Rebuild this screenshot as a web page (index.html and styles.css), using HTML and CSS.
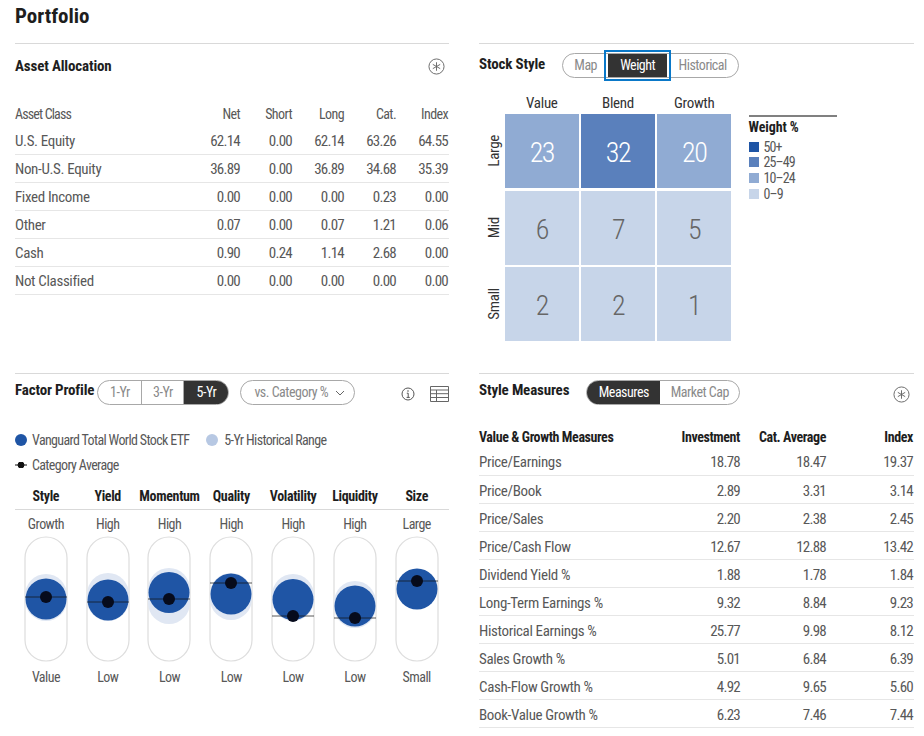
FILE: index.html
```html
<!DOCTYPE html>
<html lang="en">
<head>
<meta charset="utf-8">
<title>Portfolio</title>
<link rel="stylesheet" href="styles.css">
</head>
<body>
<main class="page">
  <h1 class="title">Portfolio</h1>
  <div class="sections">
    <section class="section">
      <div class="head head-asset">
        <h2 class="h2">Asset Allocation</h2>
        <svg class="star" viewBox="0 0 18 18"><circle cx="9" cy="9" r="8" /><path d="M9 4.5v9M5.1 6.75l7.8 4.5M12.9 6.75l-7.8 4.5" /></svg>
      </div>
      <table class="tbl alloc">
        <thead><tr><th>Asset Class</th><th>Net</th><th>Short</th><th>Long</th><th>Cat.</th><th>Index</th></tr></thead>
        <tbody>
          <tr><td>U.S. Equity</td><td>62.14</td><td>0.00</td><td>62.14</td><td>63.26</td><td>64.55</td></tr>
          <tr><td>Non-U.S. Equity</td><td>36.89</td><td>0.00</td><td>36.89</td><td>34.68</td><td>35.39</td></tr>
          <tr><td>Fixed Income</td><td>0.00</td><td>0.00</td><td>0.00</td><td>0.23</td><td>0.00</td></tr>
          <tr><td>Other</td><td>0.07</td><td>0.00</td><td>0.07</td><td>1.21</td><td>0.06</td></tr>
          <tr><td>Cash</td><td>0.90</td><td>0.24</td><td>1.14</td><td>2.68</td><td>0.00</td></tr>
          <tr><td>Not Classified</td><td>0.00</td><td>0.00</td><td>0.00</td><td>0.00</td><td>0.00</td></tr>
        </tbody>
      </table>
    </section>

    <section class="section">
      <div class="head head-style">
        <h2 class="h2">Stock Style</h2>
        <div class="seg seg-style">
          <span class="opt opt-map">Map</span>
          <span class="opt opt-weight on focus">Weight</span>
          <span class="opt opt-hist">Historical</span>
        </div>
      </div>
      <div class="style-body">
        <div class="box">
          <span></span><span class="col">Value</span><span class="col">Blend</span><span class="col">Growth</span>
          <span class="row"><b>Large</b></span><span class="cell c2">23</span><span class="cell c3">32</span><span class="cell c2">20</span>
          <span class="row"><b>Mid</b></span><span class="cell c1">6</span><span class="cell c1">7</span><span class="cell c1">5</span>
          <span class="row"><b>Small</b></span><span class="cell c1">2</span><span class="cell c1">2</span><span class="cell c1">1</span>
        </div>
        <div class="legend">
          <div class="legend-title">Weight %</div>
          <div class="lg"><i class="sw c4"></i>50+</div>
          <div class="lg"><i class="sw c3"></i>25–49</div>
          <div class="lg"><i class="sw c2"></i>10–24</div>
          <div class="lg"><i class="sw c1"></i>0–9</div>
        </div>
      </div>
    </section>

    <section class="section">
      <div class="head head-factor">
        <h2 class="h2">Factor Profile</h2>
        <div class="seg seg-factor">
          <span class="opt yr">1-Yr</span>
          <span class="opt yr div">3-Yr</span>
          <span class="opt yr on">5-Yr</span>
        </div>
        <div class="select">vs. Category %
          <svg class="chev" viewBox="0 0 10 6"><path d="M1 1l4 4 4-4" /></svg>
        </div>
        <svg class="info" viewBox="0 0 14 14"><circle cx="7" cy="7" r="6" /><path d="M5.8 6.2H7.2V10.4M5.6 10.4H8.8" /><circle class="dot" cx="7" cy="4" r=".8" /></svg>
        <svg class="grid-ico" viewBox="0 0 19 16"><path d="M.5.5h18v15H.5zM.5 4h18M.5 7.7h18M.5 11.5h18M6.5 4v11.5" /></svg>
      </div>
      <div class="key">
        <span class="key-item"><i class="kdot main"></i>Vanguard Total World Stock ETF</span>
        <span class="key-item key-second"><i class="kdot range"></i>5-Yr Historical Range</span>
      </div>
      <div class="key key-2">
        <span class="key-item"><svg class="kline" viewBox="0 0 12 6"><path d="M0 3h12" /><circle cx="6" cy="3" r="3" /></svg>Category Average</span>
      </div>
      <div class="factors">
        <div class="fcol"><b class="fh">Style</b><span class="fl">Growth</span>
          <svg class="pill" viewBox="0 0 44 126"><rect class="tr" x="1" y="1" width="42" height="124" rx="21"/><rect class="rg" x="1" y="38" width="42" height="47" rx="21"/><circle class="mn" cx="22" cy="63" r="20.5"/><path class="ln" d="M1 61h42"/><circle class="cat" cx="22" cy="61" r="6"/></svg>
          <span class="fl">Value</span></div>
        <div class="fcol"><b class="fh">Yield</b><span class="fl">High</span>
          <svg class="pill" viewBox="0 0 44 126"><rect class="tr" x="1" y="1" width="42" height="124" rx="21"/><rect class="rg" x="1" y="37" width="42" height="48" rx="21"/><circle class="mn" cx="22" cy="64" r="20.5"/><path class="ln" d="M1 66h42"/><circle class="cat" cx="22" cy="66" r="6"/></svg>
          <span class="fl">Low</span></div>
        <div class="fcol"><b class="fh">Momentum</b><span class="fl">High</span>
          <svg class="pill" viewBox="0 0 44 126"><rect class="tr" x="1" y="1" width="42" height="124" rx="21"/><rect class="rg" x="1" y="32" width="42" height="56" rx="21"/><circle class="mn" cx="22" cy="56.5" r="20.5"/><path class="ln" d="M1 63h42"/><circle class="cat" cx="22" cy="63" r="6"/></svg>
          <span class="fl">Low</span></div>
        <div class="fcol"><b class="fh">Quality</b><span class="fl">High</span>
          <svg class="pill" viewBox="0 0 44 126"><rect class="tr" x="1" y="1" width="42" height="124" rx="21"/><rect class="rg" x="1" y="37" width="42" height="47" rx="21"/><circle class="mn" cx="22" cy="58" r="20.5"/><path class="ln" d="M1 47h42"/><circle class="cat" cx="22" cy="47" r="6"/></svg>
          <span class="fl">Low</span></div>
        <div class="fcol"><b class="fh">Volatility</b><span class="fl">High</span>
          <svg class="pill" viewBox="0 0 44 126"><rect class="tr" x="1" y="1" width="42" height="124" rx="21"/><rect class="rg" x="1" y="38" width="42" height="47" rx="21"/><circle class="mn" cx="22" cy="63.5" r="20.5"/><path class="ln" d="M1 80h42"/><circle class="cat" cx="22" cy="80" r="6"/></svg>
          <span class="fl">Low</span></div>
        <div class="fcol"><b class="fh">Liquidity</b><span class="fl">High</span>
          <svg class="pill" viewBox="0 0 44 126"><rect class="tr" x="1" y="1" width="42" height="124" rx="21"/><rect class="rg" x="1" y="45" width="42" height="47" rx="21"/><circle class="mn" cx="22" cy="70" r="20.5"/><path class="ln" d="M1 82h42"/><circle class="cat" cx="22" cy="82" r="6"/></svg>
          <span class="fl">Low</span></div>
        <div class="fcol"><b class="fh">Size</b><span class="fl">Large</span>
          <svg class="pill" viewBox="0 0 44 126"><rect class="tr" x="1" y="1" width="42" height="124" rx="21"/><circle class="mn" cx="22" cy="53" r="20.5"/><path class="ln" d="M1 45h42"/><circle class="cat" cx="22" cy="45" r="6"/></svg>
          <span class="fl">Small</span></div>
      </div>
    </section>

    <section class="section">
      <div class="head head-measures">
        <h2 class="h2">Style Measures</h2>
        <div class="seg seg-measures">
          <span class="opt on m1">Measures</span>
          <span class="opt m2">Market Cap</span>
        </div>
        <svg class="star star-2" viewBox="0 0 18 18"><circle cx="9" cy="9" r="8" /><path d="M9 4.5v9M5.1 6.75l7.8 4.5M12.9 6.75l-7.8 4.5" /></svg>
      </div>
      <table class="tbl measures">
        <thead><tr><th>Value &amp; Growth Measures</th><th>Investment</th><th>Cat. Average</th><th>Index</th></tr></thead>
        <tbody>
          <tr><td>Price/Earnings</td><td>18.78</td><td>18.47</td><td>19.37</td></tr>
          <tr><td>Price/Book</td><td>2.89</td><td>3.31</td><td>3.14</td></tr>
          <tr><td>Price/Sales</td><td>2.20</td><td>2.38</td><td>2.45</td></tr>
          <tr><td>Price/Cash Flow</td><td>12.67</td><td>12.88</td><td>13.42</td></tr>
          <tr><td>Dividend Yield %</td><td>1.88</td><td>1.78</td><td>1.84</td></tr>
          <tr><td>Long-Term Earnings %</td><td>9.32</td><td>8.84</td><td>9.23</td></tr>
          <tr><td>Historical Earnings %</td><td>25.77</td><td>9.98</td><td>8.12</td></tr>
          <tr><td>Sales Growth %</td><td>5.01</td><td>6.84</td><td>6.39</td></tr>
          <tr><td>Cash-Flow Growth %</td><td>4.92</td><td>9.65</td><td>5.60</td></tr>
          <tr><td>Book-Value Growth %</td><td>6.23</td><td>7.46</td><td>7.44</td></tr>
        </tbody>
      </table>
    </section>
  </div>
</main>
</body>
</html>
```
FILE: styles.css
```css
* { box-sizing: border-box; }
html, body { margin: 0; padding: 0; background: #fff; }
body {
  font-family: "Roboto Condensed", "Liberation Sans Narrow", "Arial Narrow", Roboto, sans-serif;
  font-stretch: condensed;
  font-size: 15px;
  color: #585858;
  height: 736px;
  overflow: hidden;
}
.page { padding: 0 10px 0 15px; }
.title { margin: 0; height: 43px; padding-top: 4px; font-size: 21px; line-height: 24px; font-weight: 700; color: #1e1e1e; }
.sections { display: grid; grid-template-columns: 434px 435px; column-gap: 30px; grid-template-rows: 330px 363px; }
.section { border-top: 1px solid #d9d9d9; }
.head { display: flex; align-items: flex-start; height: 44px; position: relative; }
.h2 { margin: 0; font-size: 15px; line-height: 18px; font-weight: 700; letter-spacing: -.15px; color: #1e1e1e; padding-top: 12px; white-space: nowrap; }
.head-asset .h2 { padding-top: 13px; }
.head-style .h2 { padding-top: 11px; }
.head-factor .h2, .head-measures .h2 { padding-top: 7px; }
.star { width: 17px; height: 17px; margin: 14px 4px 0 auto; fill: none; stroke: #666; stroke-width: 1; }
.star-2 { margin-top: 12px; margin-right: 4px; }

.tbl { width: 100%; border-collapse: collapse; table-layout: fixed; }
.tbl th, .tbl td { padding: 0; text-align: right; font-weight: 400; white-space: nowrap; }
.tbl th:first-child, .tbl td:first-child { text-align: left; letter-spacing: -.35px; }
.tbl th:last-child, .tbl td:last-child { padding-right: 1px; }
.tbl td { height: 28px; padding-top: 2px; border-bottom: 1px solid #e6e6e6; letter-spacing: -.75px; }
.alloc { margin-top: 14px; }
.alloc th { height: 24px; font-size: 14px; letter-spacing: -.6px; }
.alloc th:first-child { width: 172px; letter-spacing: -.85px; }
.alloc th:nth-child(2) { width: 53px; }
.alloc th:nth-child(3), .alloc th:nth-child(4), .alloc th:nth-child(5) { width: 52px; }
.measures { margin-top: 9px; }
.measures td { padding-top: 3px; }
.measures th { height: 20px; font-size: 14px; font-weight: 700; color: #1e1e1e; letter-spacing: -.4px; }
.measures th:first-child { width: 175px; letter-spacing: -.4px; }
.measures th:nth-child(2) { width: 86px; }
.measures th:nth-child(3) { width: 86px; }

.seg { display: flex; height: 25px; border: 1px solid #a8a8a8; border-radius: 13px; font-size: 14px; line-height: 23px; color: #8a8a8a; letter-spacing: -.5px; }
.opt { display: block; text-align: center; }
.on { background: #333; color: #fff; }
.seg-style { margin: 9px 0 0 17px; width: 177px; }
.opt-map { width: 45px; }
.opt-weight { width: 59px; }
.opt-hist { flex: 1; }
.focus { outline: 2px solid #0a78c8; outline-offset: 2px; position: relative; }

.style-body { display: flex; }
.box { display: grid; grid-template-columns: 23.5px repeat(3, 73.7px); grid-template-rows: 23.5px repeat(3, 74px); gap: 2.5px; }
.col { text-align: center; line-height: 18px; padding-top: 6px; font-size: 15px; color: #333; letter-spacing: -.3px; }
.row { display: flex; align-items: center; justify-content: flex-end; color: #333; }
.row b { font-weight: 400; writing-mode: vertical-rl; transform: rotate(180deg); letter-spacing: -.3px; }
.cell { display: flex; align-items: center; justify-content: center; padding-top: 3px; font-size: 28px; font-weight: 300; letter-spacing: -1.4px; color: #fff; }
.c1 { background: #c7d5e9; color: #666; }
.c2 { background: #90abd3; }
.c3 { background: #5a80bc; }
.c4 { background: #1f55a5; }
.legend { width: 88px; margin: 27px 0 0 17.5px; border-top: 2px solid #808080; }
.legend-title { font-weight: 700; color: #1e1e1e; font-size: 14px; line-height: 18px; padding-top: 1px; margin-bottom: 3px; letter-spacing: -.1px; }
.lg { display: flex; align-items: center; height: 15.6px; font-size: 14px; letter-spacing: -.9px; }
.sw { width: 10px; height: 10px; margin-right: 5px; }

.seg-factor { margin: 6px 0 0 3px; width: 132px; }
.yr { width: 43px; }
.yr:first-child { border-radius: 12px 0 0 12px; }
.yr.on { border-radius: 0 12px 12px 0; flex: 1; }
.div { border-left: 1px solid #a8a8a8; border-right: 1px solid #a8a8a8; }
.select { margin: 6px 0 0 11px; height: 25px; width: 115px; border: 1px solid #a8a8a8; border-radius: 13px; font-size: 14px; line-height: 23px; padding-left: 13px; color: #8a8a8a; display: flex; align-items: center; gap: 7px; letter-spacing: -.5px; white-space: nowrap; }
.chev { width: 10px; height: 6px; fill: none; stroke: #666; stroke-width: 1; }
.info { width: 14px; height: 14px; margin: 13px 0 0 46px; fill: none; stroke: #555; stroke-width: 1; }
.info .dot { fill: #555; stroke: none; }
.grid-ico { width: 19px; height: 16px; margin: 12px 0 0 auto; fill: none; stroke: #666; stroke-width: 1; }
.key { display: flex; height: 18px; line-height: 18px; margin-top: 13px; font-size: 14px; letter-spacing: -.65px; }
.key-2 { margin-top: 7px; }
.key-item { display: flex; align-items: center; white-space: nowrap; }
.key-second { margin-left: 17px; }
.kdot { width: 12px; height: 12px; border-radius: 50%; margin-right: 5px; }
.main { background: #1f55a5; }
.range { background: #b7c8e3; margin-right: 6px; }
.kline { width: 12px; height: 6px; margin-right: 5px; stroke: #111; fill: #111; }
.factors { display: grid; grid-template-columns: repeat(7, 61.8px); margin-top: 13px; width: 434px; position: relative; }
.factors::before { content: ""; position: absolute; left: 0; right: 0; top: 22px; border-top: 1px solid #d9d9d9; }
.fcol { display: flex; flex-direction: column; align-items: center; }
.fh { height: 18px; line-height: 18px; font-weight: 700; font-size: 14px; color: #1e1e1e; margin-bottom: 10px; white-space: nowrap; letter-spacing: -.35px; }
.fl { height: 18px; line-height: 18px; font-size: 14px; letter-spacing: -.55px; }
.pill { width: 44px; height: 126px; margin: 3px 0 6px; }
.tr { fill: #fff; stroke: #ddd; stroke-width: 1.2; }
.rg { fill: #e0e7f3; }
.mn { fill: #1f55a5; }
.ln { stroke: #111; stroke-opacity: .7; stroke-width: 1; }
.cat { fill: #060b1c; }

.seg-measures { margin: 6px 0 0 17px; width: 154px; }
.m1 { width: 73px; border-radius: 12px 0 0 12px; }
.m2 { flex: 1; }
```
